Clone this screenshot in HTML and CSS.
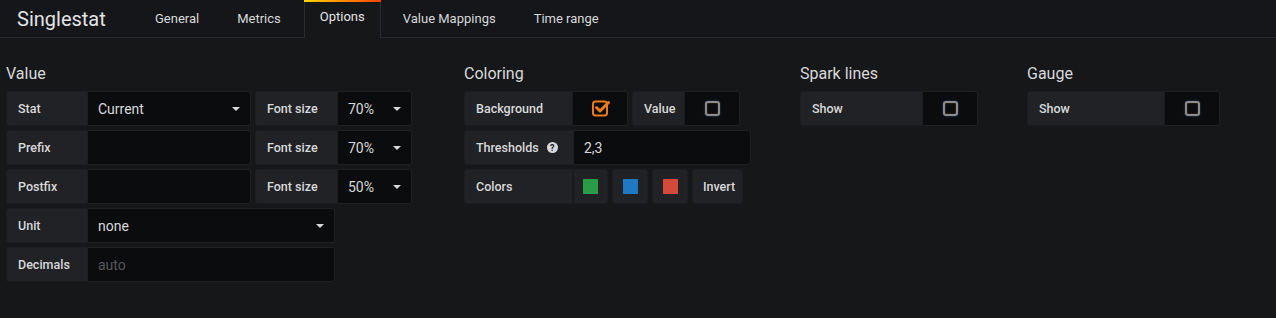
FILE: index.html
```html
<!DOCTYPE html>
<html lang="en">
<head>
  <meta charset="UTF-8">
  <title>Singlestat - Options</title>
  <link rel="stylesheet" href="styles.css">
</head>
<body>

  <!-- panel editor header -->
  <header class="edit-header">
    <div class="edit-title">Singlestat</div>
    <ul class="tabs">
      <li class="tab">General</li>
      <li class="tab">Metrics</li>
      <li class="tab active">Options</li>
      <li class="tab">Value Mappings</li>
      <li class="tab">Time range</li>
    </ul>
  </header>

  <main class="editor">

    <section class="section section-value">
      <h5 class="section-title">Value</h5>
      <div class="form-row">
        <div class="form">
          <label class="form-label w-82">Stat</label>
          <div class="form-select w-163">Current<span class="caret"></span></div>
        </div>
        <div class="form">
          <label class="form-label w-83">Font size</label>
          <div class="form-select w-74">70%<span class="caret"></span></div>
        </div>
      </div>
      <div class="form-row">
        <div class="form">
          <label class="form-label w-82">Prefix</label>
          <div class="form-input w-163"></div>
        </div>
        <div class="form">
          <label class="form-label w-83">Font size</label>
          <div class="form-select w-74">70%<span class="caret"></span></div>
        </div>
      </div>
      <div class="form-row">
        <div class="form">
          <label class="form-label w-82">Postfix</label>
          <div class="form-input w-163"></div>
        </div>
        <div class="form">
          <label class="form-label w-83">Font size</label>
          <div class="form-select w-74">50%<span class="caret"></span></div>
        </div>
      </div>
      <div class="form-row">
        <div class="form">
          <label class="form-label w-82">Unit</label>
          <div class="form-select w-247">none<span class="caret"></span></div>
        </div>
      </div>
      <div class="form-row">
        <div class="form">
          <label class="form-label w-82">Decimals</label>
          <div class="form-input w-247 placeholder">auto</div>
        </div>
      </div>
    </section>

    <section class="section section-coloring">
      <h5 class="section-title">Coloring</h5>
      <div class="form-row">
        <div class="form">
          <label class="form-label w-109">Background</label>
          <div class="checkbox-cell">
            <svg class="check-on" width="20" height="20" viewBox="0 0 20 20">
              <rect x="2" y="3.5" width="14" height="14" rx="2.5" fill="none" stroke="#eb7b18" stroke-width="2"/>
              <path d="M5.5 9.5 L9 13 L17.5 4.5" fill="none" stroke="#eb7b18" stroke-width="3" stroke-linecap="round" stroke-linejoin="round"/>
            </svg>
          </div>
        </div>
        <div class="form">
          <label class="form-label w-53">Value</label>
          <div class="checkbox-cell"><span class="checkbox"></span></div>
        </div>
      </div>
      <div class="form-row">
        <div class="form">
          <label class="form-label w-110">Thresholds <span class="help">?</span></label>
          <div class="form-input w-177">2,3</div>
        </div>
      </div>
      <div class="form-row">
        <div class="form">
          <label class="form-label w-109">Colors</label>
          <div class="swatch-cell first"><span class="swatch green"></span></div>
        </div>
        <div class="swatch-cell"><span class="swatch blue"></span></div>
        <div class="swatch-cell"><span class="swatch red"></span></div>
        <label class="form-label invert">Invert</label>
      </div>
    </section>

    <section class="section section-spark">
      <h5 class="section-title">Spark lines</h5>
      <div class="form-row">
        <div class="form">
          <label class="form-label w-123">Show</label>
          <div class="checkbox-cell"><span class="checkbox"></span></div>
        </div>
      </div>
    </section>

    <section class="section section-gauge">
      <h5 class="section-title">Gauge</h5>
      <div class="form-row">
        <div class="form">
          <label class="form-label w-138">Show</label>
          <div class="checkbox-cell"><span class="checkbox"></span></div>
        </div>
      </div>
    </section>

  </main>
</body>
</html>
```

FILE: styles.css
```css
* { margin: 0; padding: 0; box-sizing: border-box; }
body {
  font-family: Roboto, "Liberation Sans", sans-serif;
  background: #161719;
  color: #d8d9da;
  height: 318px;
  overflow: hidden;
}

/* header + tabs */
.edit-header {
  display: flex;
  align-items: stretch;
  height: 38px;
  background: #141619;
  border-bottom: 1px solid #2b2c30;
}
.edit-title {
  font-size: 20px;
  color: #e3e4e6;
  padding: 7px 0 0 17px;
  width: 139px;
}
.tabs {
  list-style: none;
  display: flex;
  gap: 6px;
}
.tab {
  font-size: 13px;
  color: #d8d9da;
  padding: 11px 16px 0;
  margin-bottom: -1px;
}
.tab.active {
  background: #161719;
  border-left: 1px solid #2b2c30;
  border-right: 1px solid #2b2c30;
  padding: 9px 15px 0;
  margin-left: 1px;
  position: relative;
  color: #e3e4e6;
}
.tab.active::before {
  content: '';
  position: absolute;
  top: 0; left: -1px; right: -1px;
  height: 2px;
  background: linear-gradient(to right, #ffd500, #ff4400);
}

/* editor body */
.editor {
  display: flex;
  padding: 26px 0 0 6px;
}
.section { margin-right: 48px; }
.section-value { width: 410px; }
.section-coloring { width: 288px; }
.section-spark { width: 179px; }

.section-title {
  font-size: 16px;
  font-weight: 400;
  line-height: 20px;
  color: #d8d9da;
  margin-bottom: 7px;
}

.form-row {
  display: flex;
  gap: 4px;
  margin-bottom: 4px;
}
.form { display: flex; }

.form-label {
  display: flex;
  align-items: center;
  height: 35px;
  padding-left: 11px;
  font-size: 12.5px;
  font-weight: 500;
  color: #d8d9da;
  background: #212226;
  border: 1px solid #1c1d21;
  border-radius: 3px 0 0 3px;
}
.form-input,
.form-select {
  display: flex;
  align-items: center;
  height: 35px;
  padding: 0 10px;
  font-size: 14px;
  color: #d8d9da;
  background: #0b0c0e;
  border: 1px solid #1f2023;
  border-left: none;
  border-radius: 0 3px 3px 0;
}
.form-select { justify-content: space-between; }
.placeholder { color: #55575c; }

.caret {
  width: 0; height: 0;
  border-left: 4px solid transparent;
  border-right: 4px solid transparent;
  border-top: 4px solid #d8d9da;
  margin-top: 1px;
}

.help {
  display: inline-flex;
  align-items: center;
  justify-content: center;
  width: 11px; height: 11px;
  margin-left: 8px;
  border-radius: 50%;
  background: #d8d9da;
  color: #161719;
  font-size: 9px;
  font-weight: 700;
}

/* checkboxes */
.checkbox-cell {
  display: flex;
  align-items: center;
  justify-content: center;
  width: 55px;
  height: 35px;
  background: #0b0c0e;
  border: 1px solid #1f2023;
  border-left: none;
  border-radius: 0 3px 3px 0;
}
.checkbox {
  width: 15px; height: 15px;
  border: 2px solid #8c8c8f;
  border-radius: 3px;
  box-shadow: 0 0 2px rgba(80, 130, 200, 0.6), inset 0 0 2px rgba(235, 150, 60, 0.4);
}
.check-on { margin: -2px 0 0 2px; }

/* color swatches */
.swatch-cell {
  display: flex;
  align-items: center;
  justify-content: center;
  width: 36px;
  height: 35px;
  background: #212226;
  border: 1px solid #1c1d21;
  border-radius: 3px;
}
.swatch-cell.first {
  width: 35px;
  border-radius: 0 3px 3px 0;
  border-left: 1px solid #17181b;
}
.swatch { width: 15px; height: 15px; }
.swatch.green { background: #299c46; }
.swatch.blue { background: #1f78c1; }
.swatch.red { background: #d44a3a; }
.form-label.invert {
  width: 51px;
  padding-left: 10px;
  border-radius: 3px;
}

/* widths */
.w-53 { width: 53px; }
.w-74 { width: 74px; }
.w-82 { width: 82px; }
.w-83 { width: 83px; }
.w-109 { width: 109px; }
.w-110 { width: 110px; }
.w-123 { width: 123px; }
.w-138 { width: 138px; }
.w-163 { width: 163px; }
.w-177 { width: 177px; }
.w-247 { width: 247px; }
```
